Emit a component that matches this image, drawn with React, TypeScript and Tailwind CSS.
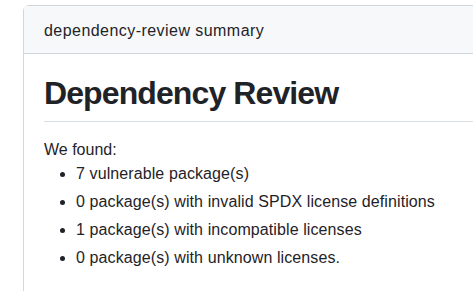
const findings = [
  "7 vulnerable package(s)",
  "0 package(s) with invalid SPDX license definitions",
  "1 package(s) with incompatible licenses",
  "0 package(s) with unknown licenses.",
];

export default function App() {
  return (
    <div className="h-[291px] w-full overflow-hidden bg-white font-['Liberation_Sans',Arial,sans-serif] text-[#1f2328]">
      <div className="ml-[23px] mt-[5px] w-[480px] rounded-tl-md border border-[#d0d7de]">
        <div className="flex h-[48px] items-center border-b border-[#d0d7de] bg-[#f6f8fa] px-5 pt-[3px] text-[16px] tracking-[0.45px]">
          dependency-review summary
        </div>
        <div className="px-5 pt-[19px] pb-10">
          <h1 className="border-b border-[#d8dee4] pb-2 text-[32px] leading-[40px] font-semibold tracking-[-0.9px]">
            Dependency Review
          </h1>
          <p className="mt-4 text-base leading-6">We found:</p>
          <ul className="list-disc pl-8 text-base leading-6 tracking-[0.1px]">
            {findings.map((f, i) => (
              <li key={i} className={i === 0 ? "" : "mt-1"}>
                {f}
              </li>
            ))}
          </ul>
        </div>
      </div>
    </div>
  );
}
